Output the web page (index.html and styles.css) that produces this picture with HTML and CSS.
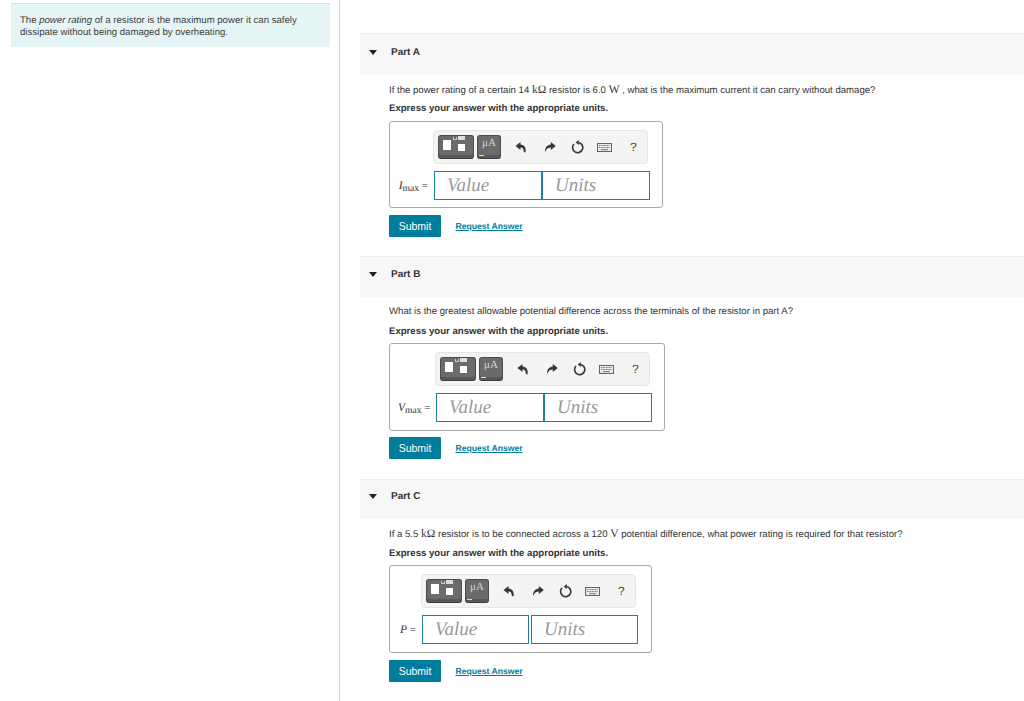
FILE: index.html
```html
<!DOCTYPE html>
<html lang="en">
<head>
<meta charset="utf-8">
<title>Power rating</title>
<link rel="stylesheet" href="styles.css">
</head>
<body>
<svg class="defs" width="0" height="0" aria-hidden="true">
  <symbol id="i-undo" viewBox="0 0 12 12"><path d="M5.500 1 .5 5l5 4V6.500c2.200 0 3.200 1.200 3.400 4.800h1.700C11.300 6.500 9.300 3.800 5.500 3.500z" fill="#2d3a40"/></symbol>
  <symbol id="i-redo" viewBox="0 0 12 12"><path d="M6.800 1l5 4-5 4V6.500C4.200 6.500 2.300 7.800 1.200 11 .6 7 3 3.800 6.800 3.500z" fill="#2d3a40"/></symbol>
  <symbol id="i-reset" viewBox="0 0 14 14"><path d="M7.500 2.500A5.100 5.100 0 1 1 3 4" fill="none" stroke="#2d3a40" stroke-width="1.600"/><path d="M4.700 2.500 7.800 0v5z" fill="#2d3a40"/></symbol>
  <symbol id="i-kbd" viewBox="0 0 15 9"><rect x=".5" y=".5" width="14" height="8" fill="#e9e9e9" stroke="#666"/><path d="M2 2.500h11M2 4.500h11" stroke="#777" stroke-width="1" stroke-dasharray="1 .6"/><path d="M4 6.700h7" stroke="#777"/></symbol>
</svg>
<div class="page">
  <aside class="side">
    <div class="info">The <em>power rating</em> of a resistor is the maximum power it can safely dissipate without being damaged by overheating.</div>
  </aside>
  <main class="parts">

    <section class="part part-a">
      <h2 class="part-head"><span class="caret"></span>Part A</h2>
      <p class="question">If the power rating of a certain 14 <span class="math">kΩ</span> resistor is 6.0 <span class="math">W</span> , what is the maximum current it can carry without damage?</p>
      <p class="express">Express your answer with the appropriate units.</p>
      <div class="box">
        <div class="toolbar">
          <span class="tpl"><i class="sq"></i><i class="sup"></i><i class="frac"></i></span>
          <span class="mu">μA<i class="tilde"></i></span>
          <svg class="ic ic-undo"><use href="#i-undo"/></svg>
          <svg class="ic ic-redo"><use href="#i-redo"/></svg>
          <svg class="ic ic-reset"><use href="#i-reset"/></svg>
          <svg class="ic ic-kbd"><use href="#i-kbd"/></svg>
          <span class="help">?</span>
        </div>
        <div class="answer">
          <span class="label"><var>I</var><sub>max</sub> =</span>
          <span class="field">Value</span><span class="field">Units</span>
        </div>
      </div>
      <div class="actions"><button class="submit" type="button">Submit</button><a class="req" href="#">Request Answer</a></div>
    </section>

    <section class="part part-b">
      <h2 class="part-head"><span class="caret"></span>Part B</h2>
      <p class="question">What is the greatest allowable potential difference across the terminals of the resistor in part A?</p>
      <p class="express">Express your answer with the appropriate units.</p>
      <div class="box">
        <div class="toolbar">
          <span class="tpl"><i class="sq"></i><i class="sup"></i><i class="frac"></i></span>
          <span class="mu">μA<i class="tilde"></i></span>
          <svg class="ic ic-undo"><use href="#i-undo"/></svg>
          <svg class="ic ic-redo"><use href="#i-redo"/></svg>
          <svg class="ic ic-reset"><use href="#i-reset"/></svg>
          <svg class="ic ic-kbd"><use href="#i-kbd"/></svg>
          <span class="help">?</span>
        </div>
        <div class="answer">
          <span class="label"><var>V</var><sub>max</sub> =</span>
          <span class="field">Value</span><span class="field">Units</span>
        </div>
      </div>
      <div class="actions"><button class="submit" type="button">Submit</button><a class="req" href="#">Request Answer</a></div>
    </section>

    <section class="part part-c">
      <h2 class="part-head"><span class="caret"></span>Part C</h2>
      <p class="question">If a 5.5 <span class="math">kΩ</span> resistor is to be connected across a 120 <span class="math">V</span> potential difference, what power rating is required for that resistor?</p>
      <p class="express">Express your answer with the appropriate units.</p>
      <div class="box">
        <div class="toolbar">
          <span class="tpl"><i class="sq"></i><i class="sup"></i><i class="frac"></i></span>
          <span class="mu">μA<i class="tilde"></i></span>
          <svg class="ic ic-undo"><use href="#i-undo"/></svg>
          <svg class="ic ic-redo"><use href="#i-redo"/></svg>
          <svg class="ic ic-reset"><use href="#i-reset"/></svg>
          <svg class="ic ic-kbd"><use href="#i-kbd"/></svg>
          <span class="help">?</span>
        </div>
        <div class="answer">
          <span class="label"><var>P</var> =</span>
          <span class="field">Value</span><span class="field">Units</span>
        </div>
      </div>
      <div class="actions"><button class="submit" type="button">Submit</button><a class="req" href="#">Request Answer</a></div>
    </section>

  </main>
</div>
</body>
</html>
```
FILE: styles.css
```css
* { box-sizing: border-box; }
html, body { margin: 0; padding: 0; }
body {
  font-family: "Liberation Sans", Arial, sans-serif;
  font-size: 9.6px;
  color: #333;
  background: #fff;
  overflow: hidden;
  text-rendering: geometricPrecision;
}
.defs { position: absolute; }
.page { display: flex; height: 701px; }
.side {
  width: 340px;
  flex: none;
  border-right: 1px solid #c9d1d8;
  padding: 3px 9px 0 11px;
}
.info {
  background: #e5f5f6;
  border-top: 1px solid #d5dde0;
  height: 44px;
  padding: 11px 9px 0;
  line-height: 12px;
  color: #3c3c3c;
}
.parts { flex: 1; padding: 33px 0 0 20px; }
.part { height: 223px; }
.part-head {
  display: flex;
  align-items: center;
  height: 42px;
  margin: 0;
  padding-bottom: 5px;
  background: #f7f7f7;
  border-top: 1px solid #eee;
  font-size: 10px;
  font-weight: bold;
  color: #333;
}
.part-b .part-head { height: 41px; padding-bottom: 6px; }
.part-c .part-head { height: 40px; padding-bottom: 6px; }
.caret {
  width: 0;
  height: 0;
  margin: 0 14px 0 9px;
  border-left: 4.500px solid transparent;
  border-right: 4.500px solid transparent;
  border-top: 5px solid #222;
}
.question, .express { margin: 0 0 0 29px; line-height: 12px; }
.question { padding-top: 10px; }
.express { padding-top: 6px; font-weight: bold; }
.part-b .question { padding-top: 9px; }
.part-b .express { padding-top: 8px; }
.part-c .express { padding-top: 7px; }
.math { font-family: "Liberation Serif", serif; font-size: 11.5px; line-height: 0; }

.box {
  margin: 6px 0 0 29px;
  height: 87px;
  border: 1px solid #aaa;
  border-radius: 3px;
  padding: 8px 0 0 8px;
}
.part-a .box { width: 274px; }
.part-b .box { width: 276px; height: 88px; margin-top: 5px; }
.part-c .box { width: 263px; height: 88px; margin-top: 5px; }

.toolbar {
  display: flex;
  align-items: center;
  height: 34px;
  width: 215px;
  margin-left: 35px;
  padding-left: 4px;
  background: #f4f4f4;
  border: 1px solid #e6e6e6;
  border-radius: 4px;
}
.part-b .toolbar { margin-left: 37px; }
.part-c .toolbar { margin-left: 23px; }

.tpl, .mu {
  position: relative;
  display: block;
  flex: none;
  height: 24px;
  background: #6b6b6b;
  border: 1px solid #4c4c4c;
  border-bottom: 1px solid #3d3d3d;
  border-radius: 3px;
  box-shadow: inset 0 -3px 0 #585858;
}
.tpl { width: 36px; }
.mu {
  width: 24px;
  margin-left: 3px;
  padding-top: 1px;
  text-align: center;
  font-family: "Liberation Serif", serif;
  font-size: 11px;
  line-height: 12px;
  color: #d6d6d6;
}
.tpl i, .mu i { position: absolute; display: block; }
.tpl .sq { left: 4px; top: 4px; width: 8px; height: 10px; background: #fff; }
.tpl .sup { left: 14px; top: 1px; width: 4px; height: 3px; border: 1px solid #ccc; border-top: 0; }
.tpl .frac { left: 19px; top: 0; width: 7px; height: 15px; background: linear-gradient(#ddd 0 4px, #6b6b6b 4px 8px, #fff 8px); }
.mu .tilde { left: 1px; bottom: 2px; width: 5px; height: 1px; background: #ddd; }

.ic { display: block; flex: none; }
.ic-undo { width: 12px; height: 12px; margin-left: 14px; }
.ic-redo { width: 12px; height: 12px; margin-left: 17px; }
.ic-reset { width: 14px; height: 14px; margin-left: 15px; }
.ic-kbd { width: 15px; height: 9px; margin-left: 12px; }
.help { margin-left: 18px; font-size: 12px; color: #444; }

.answer { display: flex; align-items: center; margin-top: 7px; height: 29px; }
.label {
  width: 36px;
  flex: none;
  padding-right: 6px;
  white-space: nowrap;
  text-align: right;
  font-family: "Liberation Serif", serif;
  font-size: 11px;
}
.part-b .label { width: 38px; }
.part-c .label { width: 24px; }
.label var { font-style: italic; font-size: 11.5px; }
.label sub { font-size: 9.6px; vertical-align: -2px; line-height: 0; }
.field {
  display: flex;
  align-items: center;
  width: 108px;
  height: 29px;
  padding-left: 12px;
  border: 1px solid #1a809f;
  background: #fff;
  font-family: "Liberation Serif", serif;
  font-style: italic;
  font-size: 19px;
  color: #999;
}
.part-c .field { width: 107px; margin-right: 2px; }

.actions { display: flex; align-items: center; margin-top: 7px; }
.part-b .actions { margin-top: 6px; }
.submit {
  width: 52px;
  height: 22px;
  padding: 0;
  border: 0;
  border-radius: 1px;
  background: #007c9c;
  color: #fff;
  font: 10.5px "Liberation Sans", Arial, sans-serif;
  margin-left: 29px;
}
.req {
  margin-left: 14.500px;
  font-size: 8.600px;
  font-weight: bold;
  color: #007c9c;
  text-decoration: underline;
}
```
